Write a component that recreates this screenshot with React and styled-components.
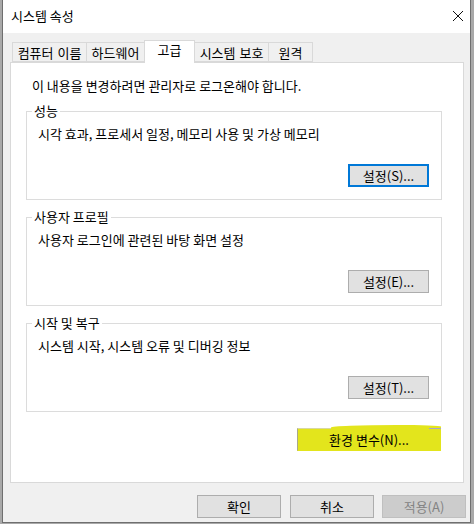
import React from "react";
import styled, { createGlobalStyle } from "styled-components";

const GlobalStyle = createGlobalStyle`
  html, body {
    margin: 0;
    padding: 0;
    background: #a9a9a9;
    overflow: hidden;
  }
  body {
    font-family: "Noto Sans CJK KR", "Noto Sans", sans-serif;
    font-size: 13px;
    color: #000;
  }
`;

const Window = styled.div`
  box-sizing: border-box;
  width: 469px;
  height: 523px;
  margin-left: 2px;
  background: #f0f0f0;
  border: 1px solid #6f6f6f;
  border-top: 0;
  display: flex;
  flex-direction: column;
`;

const TitleBar = styled.div`
  height: 31px;
  background: #fff;
  display: flex;
  align-items: center;
  justify-content: space-between;
  padding: 0 6px 2px 8px;
  line-height: 16px;
`;

const Close = styled.svg`
  width: 12px;
  height: 12px;
`;

const Body = styled.div`
  padding: 0 6px 0 7px;
  display: flex;
  flex-direction: column;
`;

const TabRow = styled.div`
  display: flex;
  align-items: flex-end;
  height: 22px;
  margin-top: 7px;
  padding-left: 2px;
`;

const Tab = styled.div`
  box-sizing: border-box;
  width: ${({ $width }) => $width}px;
  height: ${({ $active }) => ($active ? "23px" : "20px")};
  margin: ${({ $active }) => ($active ? "0 0 -1px -1px" : "0")};
  padding-top: ${({ $active }) => ($active ? "1px" : "2px")};
  background: ${({ $active }) => ($active ? "#fff" : "#f0f0f0")};
  border: 1px solid #d9d9d9;
  border-left-width: ${({ $first, $active }) => ($first || $active ? "1px" : "0")};
  border-bottom-width: ${({ $active }) => ($active ? "0" : "1px")};
  position: relative;
  z-index: ${({ $active }) => ($active ? 2 : 1)};
  line-height: 16px;
  text-align: center;
  word-spacing: 1px;
  white-space: nowrap;
`;

const Panel = styled.div`
  box-sizing: border-box;
  height: 421px;
  background: #fff;
  border: 1px solid #d9d9d9;
  padding: 15px 20px 0 15px;
  display: flex;
  flex-direction: column;
`;

const Notice = styled.div`
  line-height: 16px;
  padding-left: 6px;
`;

const Group = styled.div`
  box-sizing: border-box;
  width: 416px;
  height: 89px;
  margin-top: 17px;
  border: 1px solid #dcdcdc;
  padding: 0 12px 0 11px;
  display: flex;
  flex-direction: column;
`;

const GroupLabel = styled.div`
  align-self: flex-start;
  margin: -9px 0 0 -6px;
  padding: 0 2px;
  background: #fff;
  line-height: 16px;
`;

const Desc = styled.div`
  margin-top: 7px;
  line-height: 16px;
`;

const Button = styled.button`
  box-sizing: border-box;
  width: ${({ $wide }) => ($wide ? "144px" : "81px")};
  height: 23px;
  padding: 0;
  font-family: inherit;
  font-size: 13px;
  line-height: 16px;
  color: ${({ $disabled }) => ($disabled ? "#838383" : "#000")};
  background: ${({ $disabled }) => ($disabled ? "#cccccc" : "#e1e1e1")};
  border: ${({ $focus, $disabled }) =>
    $focus
      ? "2px solid #0078d7"
      : $disabled
      ? "1px solid #bfbfbf"
      : "1px solid #adadad"};
`;

const GroupButton = styled(Button)`
  align-self: flex-end;
  margin-top: auto;
  margin-bottom: 12px;
`;

const EnvRow = styled.div`
  display: flex;
  justify-content: flex-end;
  width: 416px;
  margin-top: 16px;
`;

const Highlighted = styled(Button)`
  position: relative;
  margin-right: 1px;
  background: #e3e51c;
  border: 1px solid #e3e51c;
  border-left-color: #a9a98a;
  border-top-color: #d8d8a0;
  &::after {
    content: "";
    position: absolute;
    top: -4px;
    right: -1px;
    width: 110px;
    height: 4px;
    background: #e3e51c;
    border-radius: 60% 40% 0 0;
  }
  &::before {
    content: "";
    position: absolute;
    top: -1px;
    right: -1px;
    width: 12px;
    height: 1px;
    background: #a9a3cc;
    z-index: 1;
  }
`;

const Footer = styled.div`
  display: flex;
  justify-content: flex-end;
  gap: 9px;
  margin-top: 12px;
  margin-right: -2px;
`;

const FooterButton = styled(Button)`
  width: 84px;
  margin-right: ${({ $tight }) => ($tight ? "-1px" : "0")};
`;

function App() {
  const tabs = [
    { label: "컴퓨터 이름", width: 75 },
    { label: "하드웨어", width: 58 },
    { label: "고급", width: 51, active: true },
    { label: "시스템 보호", width: 74 },
    { label: "원격", width: 44 },
  ];
  const groups = [
    { title: "성능", desc: "시각 효과, 프로세서 일정, 메모리 사용 및 가상 메모리", btn: "설정(S)...", focus: true },
    { title: "사용자 프로필", desc: "사용자 로그인에 관련된 바탕 화면 설정", btn: "설정(E)..." },
    { title: "시작 및 복구", desc: "시스템 시작, 시스템 오류 및 디버깅 정보", btn: "설정(T)..." },
  ];

  return (
    <>
      <GlobalStyle />
      <Window>
        <TitleBar>
          <span>시스템 속성</span>
          <Close viewBox="0 0 12 12">
            <path d="M1 1 L11 11 M11 1 L1 11" stroke="#111" strokeWidth="1" fill="none" />
          </Close>
        </TitleBar>
        <Body>
          <TabRow>
            {tabs.map((t, i) => (
              <Tab key={t.label} $first={i === 0} $active={t.active} $width={t.width}>
                {t.label}
              </Tab>
            ))}
          </TabRow>
          <Panel>
            <Notice>이 내용을 변경하려면 관리자로 로그온해야 합니다.</Notice>
            {groups.map((g) => (
              <Group key={g.title}>
                <GroupLabel>{g.title}</GroupLabel>
                <Desc>{g.desc}</Desc>
                <GroupButton $focus={g.focus}>{g.btn}</GroupButton>
              </Group>
            ))}
            <EnvRow>
              <Highlighted $wide>환경 변수(N)...</Highlighted>
            </EnvRow>
          </Panel>
          <Footer>
            <FooterButton>확인</FooterButton>
            <FooterButton $tight>취소</FooterButton>
            <FooterButton $disabled>적용(A)</FooterButton>
          </Footer>
        </Body>
      </Window>
    </>
  );
}

export default App;
